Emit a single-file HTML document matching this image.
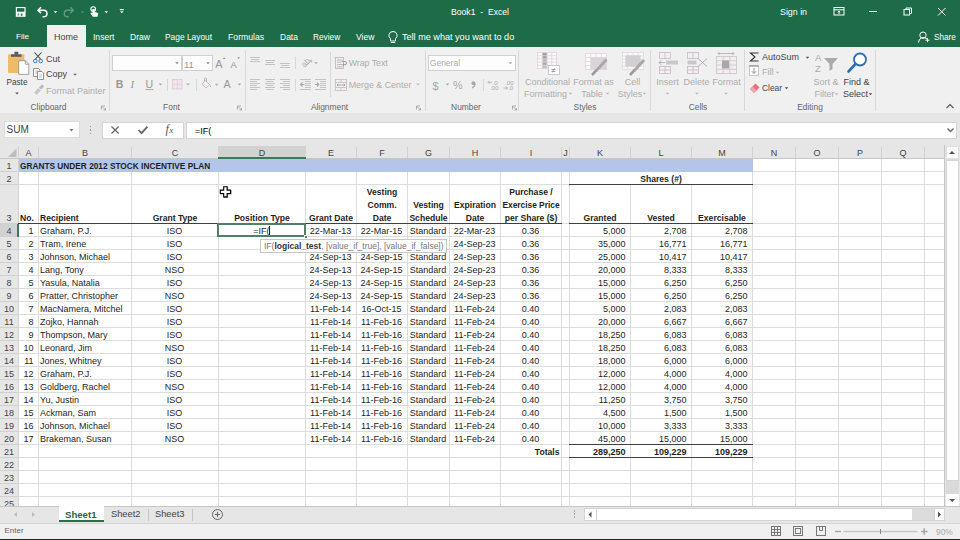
<!DOCTYPE html><html><head><meta charset="utf-8"><style>
html,body{margin:0;padding:0;}
body{width:960px;height:540px;overflow:hidden;position:relative;background:#fff;font-family:"Liberation Sans",sans-serif;}
div,svg{position:absolute;box-sizing:border-box;}
.t{white-space:nowrap;line-height:1;}
.ui{font-size:9.3px;color:#444;}
.tab{font-size:9.3px;color:#fff;}
.c{font-size:9px;color:#1e1e1e;white-space:nowrap;line-height:1;}
.c.b{font-weight:bold;font-size:8.6px;}
</style></head><body>
<div style="left:0px;top:0px;width:960px;height:47px;background:#1e6b47;"></div>
<div style="left:47px;top:25px;width:39px;height:22px;background:#f0f0f0;"></div>
<svg style="left:0;top:0" width="130" height="25" viewBox="0 0 130 25">
<rect x="15.8" y="7" width="9.8" height="9.8" fill="#fff"/>
<rect x="17" y="8.1" width="7.4" height="3.6" fill="#1e6b47"/>
<rect x="17.6" y="13.4" width="1.6" height="2.2" fill="#6a9a7e"/>
<rect x="20.8" y="13.6" width="1.6" height="2.2" fill="#1e6b47"/>
<path d="M38.5 10.2h5.2a3.3 3.3 0 0 1 0 6.6h-1.2" fill="none" stroke="#fff" stroke-width="1.5"/>
<path d="M41 7.3l-3 2.9 3 2.9" fill="none" stroke="#fff" stroke-width="1.5"/>
<path d="M53.8 11.2h3.4l-1.7 2z" fill="#fff"/>
<path d="M72.8 10.2h-5.2a3.3 3.3 0 0 0 0 6.6h1.2" fill="none" stroke="#5e9c79" stroke-width="1.5"/>
<path d="M70.3 7.3l3 2.9-3 2.9" fill="none" stroke="#5e9c79" stroke-width="1.5"/>
<path d="M81 11.4h3l-1.5 1.8z" fill="#5e9c79"/>
<circle cx="93.2" cy="9" r="2.3" fill="none" stroke="#fff" stroke-width="1.1"/>
<path d="M92.4 9v4.2l-1.2-0.8-0.8 0.8 2.4 3.5h4.8l0.6-3.6-3.5-1v-3.1z" fill="#fff"/>
<path d="M104.6 11.2h3.4l-1.7 2z" fill="#fff"/>
<path d="M119.8 9.6h4" stroke="#fff" stroke-width="1.1"/>
<path d="M120 11.3h3.6l-1.8 2z" fill="#fff"/>
</svg>
<div class="t" style="left:451px;top:8px;font-size:8.65px;color:#fff;">Book1&nbsp; -&nbsp; Excel</div>
<div class="t" style="left:780px;top:8px;font-size:8.85px;color:#fff;">Sign in</div>
<svg style="left:820px;top:0" width="140" height="25" viewBox="820 0 140 25">
<g fill="none" stroke="#fff" stroke-width="1">
<rect x="834" y="7.5" width="10" height="7.5"/>
<path d="M834 9.8h10"/>
<path d="M839 14v-3 M837.8 12.2l1.2-1.2 1.2 1.2"/>
<path d="M869 11.5h8"/>
<rect x="904" y="9.5" width="5.5" height="5.5"/>
<path d="M906 9.5v-1.5h5.5v5.5h-2"/>
<path d="M938 8l7.5 7.5 M945.5 8l-7.5 7.5"/>
</g></svg>
<div class="t tab" style="left:16px;top:32.5px;font-size:8.1px;">File</div>
<div class="t tab" style="left:93px;top:32.5px;font-size:8.55px;">Insert</div>
<div class="t tab" style="left:130px;top:32.5px;font-size:8.6px;">Draw</div>
<div class="t tab" style="left:165px;top:32.5px;font-size:8.4px;">Page Layout</div>
<div class="t tab" style="left:228px;top:32.5px;font-size:8.7px;">Formulas</div>
<div class="t tab" style="left:280px;top:32.5px;font-size:8.5px;">Data</div>
<div class="t tab" style="left:313px;top:32.5px;font-size:8.3px;">Review</div>
<div class="t tab" style="left:356px;top:32.5px;font-size:8.5px;">View</div>
<div class="t tab" style="left:54px;top:32.5px;color:#444;font-size:9px;">Home</div>
<svg style="left:385px;top:28px" width="16" height="18" viewBox="0 0 16 18">
<path d="M8 3.5a4 4 0 0 0-2.5 7.2v2.3h5v-2.3A4 4 0 0 0 8 3.5z M5.8 14.5h4.4" fill="none" stroke="#fff" stroke-width="1"/></svg>
<div class="t tab" style="left:402px;top:32.5px;font-size:9.1px;">Tell me what you want to do</div>
<svg style="left:915px;top:28px" width="16" height="18" viewBox="0 0 16 18">
<circle cx="8" cy="7.2" r="3.2" fill="none" stroke="#fff" stroke-width="1"/>
<path d="M3.5 14.5a5 5 0 0 1 8.5 -3.6" fill="none" stroke="#fff" stroke-width="1"/>
<path d="M10.5 12.2h4 M12.5 10.2v4" stroke="#fff" stroke-width="1"/></svg>
<div class="t tab" style="left:934px;top:33.5px;font-size:8.2px;">Share</div>
<div style="left:0px;top:47px;width:960px;height:67px;background:#f0f0f0;border-bottom:1px solid #dadada;"></div>
<svg style="left:0;top:0" width="960" height="113" viewBox="0 0 960 113"><path d="M109.5 50V111" stroke="#d8d8d8" stroke-width="1"/><path d="M245.5 50V111" stroke="#d8d8d8" stroke-width="1"/><path d="M425.5 50V111" stroke="#d8d8d8" stroke-width="1"/><path d="M518.5 50V111" stroke="#d8d8d8" stroke-width="1"/><path d="M650.5 50V111" stroke="#d8d8d8" stroke-width="1"/><path d="M744.5 50V111" stroke="#d8d8d8" stroke-width="1"/><path d="M875.5 50V111" stroke="#d8d8d8" stroke-width="1"/><rect x="8" y="54.3" width="16.4" height="18.6" rx="1" fill="#eebb66"/><rect x="11" y="54.3" width="10.5" height="2.5" fill="#5a5a5a"/><rect x="14.4" y="51.8" width="3.9" height="3" rx="0.8" fill="#5a5a5a"/><path d="M18.7 60.7h6.6l3.5 3.5v10.2h-10.1z" fill="#fff" stroke="#8a8a8a" stroke-width="0.8"/><path d="M25.3 60.7v3.5h3.5" fill="none" stroke="#8a8a8a" stroke-width="0.8"/><path d="M15.2 92.5h3.6l-1.8 2z" fill="#555"/><path d="M34.5 52.5L41 59.5M41.5 52.5L35 59.5" stroke="#444" stroke-width="1.1" fill="none"/><circle cx="35.3" cy="61" r="1.8" fill="none" stroke="#3d7cc9" stroke-width="1"/><circle cx="40.7" cy="61" r="1.8" fill="none" stroke="#3d7cc9" stroke-width="1"/><path d="M33.5 68.5h5l1.5 1.5v6.5h-6.5z" fill="#fff" stroke="#777" stroke-width="0.8"/><path d="M37.5 71.5h4.5l1.5 1.5v6.5h-6z" fill="#fff" stroke="#777" stroke-width="0.8"/><path d="M35 71h3M35 73h2M39 75h3M39 77h3" stroke="#999" stroke-width="0.6"/><path d="M73.2 73.7h3.6l-1.8 2z" fill="#666"/><path d="M34 92.5l4.5-4.5 2.5 2.5-4.5 4.5z" fill="#c8c8c8"/><path d="M39 87.5l3-3 2 2-3 3z" fill="#b8b8b8"/><path d="M101.5 109.5V106.0H105" stroke="#999" stroke-width="0.8" fill="none"/><path d="M102.5 107.0l3 3M105.5 108.0v2h-2" stroke="#999" stroke-width="0.8" fill="none"/><rect x="112.5" y="55.5" width="69" height="15" fill="#fdfdfd" stroke="#d0d0d0" stroke-width="1"/><rect x="182.5" y="55.5" width="30" height="15" fill="#fdfdfd" stroke="#d0d0d0" stroke-width="1"/><path d="M175.2 62.2h3.6l-1.8 2z" fill="#888"/><path d="M206.2 62.2h3.6l-1.8 2z" fill="#888"/><text x="215.3" y="68" font-family="Liberation Sans" font-size="11" fill="#999">A</text><path d="M222.6 59h3l-1.5-1.8z" fill="#999"/><text x="230.6" y="68" font-family="Liberation Sans" font-size="9.3" fill="#999">A</text><path d="M237.2 57.3h3l-1.5 1.8z" fill="#999"/><text x="115.8" y="87.7" font-family="Liberation Sans" font-weight="bold" font-size="10.5" fill="#999">B</text><text x="130.5" y="87.7" font-family="Liberation Serif" font-style="italic" font-size="11" fill="#999">I</text><text x="145.5" y="87.7" font-family="Liberation Sans" font-size="10.5" fill="#999">U</text><path d="M145.5 89.5h8" stroke="#999" stroke-width="0.8"/><path d="M158.7 83.5h3.6l-1.8 2z" fill="#aaa"/><path d="M167.5 79V91" stroke="#d8d8d8" stroke-width="1"/><g fill="#f3e3ee"><rect x="172.5" y="79.5" width="4" height="4"/><rect x="178" y="79.5" width="4" height="4"/><rect x="172.5" y="85" width="4" height="4"/><rect x="178" y="85" width="4" height="4"/></g><g stroke="#dcc4d4" stroke-width="0.7" fill="none"><rect x="172.5" y="79.5" width="9.5" height="9.5"/><path d="M177.2 79.5v9.5M172.5 84.2h9.5"/></g><path d="M186.2 83.5h3.6l-1.8 2z" fill="#aaa"/><path d="M196.5 79V91" stroke="#d8d8d8" stroke-width="1"/><path d="M205.5 80.5l4 4-3.5 3.5-4-4z" fill="none" stroke="#d0b4c6" stroke-width="0.9"/><path d="M204.5 81.5v-2.5a1 1 0 0 1 2 0v3" stroke="#aaa" stroke-width="0.8" fill="none"/><path d="M209.5 84.5q1 1 1 2.5" stroke="#aaa" stroke-width="0.8" fill="none"/><path d="M214.89999999999998 83.7h3.6l-1.8 2z" fill="#aaa"/><text x="223.6" y="87.6" font-family="Liberation Sans" font-size="10.8" fill="#999">A</text><path d="M237.7 83.5h3.6l-1.8 2z" fill="#aaa"/><path d="M237.5 109.5V106.0H241" stroke="#999" stroke-width="0.8" fill="none"/><path d="M238.5 107.0l3 3M241.5 108.0v2h-2" stroke="#999" stroke-width="0.8" fill="none"/><path d="M250 57.5h10" stroke="#bdbdbd" stroke-width="0.9"/><path d="M251 59.5h8" stroke="#bdbdbd" stroke-width="0.9"/><path d="M250 61.5h10" stroke="#bdbdbd" stroke-width="0.9"/><path d="M265 60.5h10" stroke="#bdbdbd" stroke-width="0.9"/><path d="M266 62.5h8" stroke="#bdbdbd" stroke-width="0.9"/><path d="M265 64.5h10" stroke="#bdbdbd" stroke-width="0.9"/><path d="M280 63.5h10" stroke="#bdbdbd" stroke-width="0.9"/><path d="M281 65.5h8" stroke="#bdbdbd" stroke-width="0.9"/><path d="M280 67.5h10" stroke="#bdbdbd" stroke-width="0.9"/><path d="M295.5 57V69" stroke="#d8d8d8" stroke-width="1"/><text x="300.5" y="65.5" font-family="Liberation Sans" font-size="8.2" fill="#b0b0b0" transform="rotate(-45 305 62)">ab</text><path d="M305.5 66.5l6-6M309.5 60.3h2.2v2.2" stroke="#b0b0b0" stroke-width="0.9" fill="none"/><path d="M314.2 62.2h3.6l-1.8 2z" fill="#aaa"/><path d="M250 79.5h10" stroke="#bdbdbd" stroke-width="0.9"/><path d="M250 81.5h7" stroke="#bdbdbd" stroke-width="0.9"/><path d="M250 83.5h10" stroke="#bdbdbd" stroke-width="0.9"/><path d="M250 85.5h7" stroke="#bdbdbd" stroke-width="0.9"/><path d="M250 87.5h10" stroke="#bdbdbd" stroke-width="0.9"/><path d="M250 89.5h7" stroke="#bdbdbd" stroke-width="0.9"/><path d="M265 79.5h10" stroke="#bdbdbd" stroke-width="0.9"/><path d="M266.5 81.5h7" stroke="#bdbdbd" stroke-width="0.9"/><path d="M265 83.5h10" stroke="#bdbdbd" stroke-width="0.9"/><path d="M266.5 85.5h7" stroke="#bdbdbd" stroke-width="0.9"/><path d="M265 87.5h10" stroke="#bdbdbd" stroke-width="0.9"/><path d="M266.5 89.5h7" stroke="#bdbdbd" stroke-width="0.9"/><path d="M280 79.5h10" stroke="#bdbdbd" stroke-width="0.9"/><path d="M283 81.5h7" stroke="#bdbdbd" stroke-width="0.9"/><path d="M280 83.5h10" stroke="#bdbdbd" stroke-width="0.9"/><path d="M283 85.5h7" stroke="#bdbdbd" stroke-width="0.9"/><path d="M280 87.5h10" stroke="#bdbdbd" stroke-width="0.9"/><path d="M283 89.5h7" stroke="#bdbdbd" stroke-width="0.9"/><path d="M295.5 79V91" stroke="#d8d8d8" stroke-width="1"/><path d="M300 79.5h11" stroke="#bdbdbd" stroke-width="0.9"/><path d="M305 81.5h6" stroke="#bdbdbd" stroke-width="0.9"/><path d="M305 83.5h6" stroke="#bdbdbd" stroke-width="0.9"/><path d="M305 85.5h6" stroke="#bdbdbd" stroke-width="0.9"/><path d="M305 87.5h6" stroke="#bdbdbd" stroke-width="0.9"/><path d="M300 89.5h11" stroke="#bdbdbd" stroke-width="0.9"/><path d="M304.5 84.5h-4M302.5 82.5l-2 2 2 2" stroke="#aaa" stroke-width="1.1" fill="none"/><path d="M315 79.5h11" stroke="#bdbdbd" stroke-width="0.9"/><path d="M320 81.5h6" stroke="#bdbdbd" stroke-width="0.9"/><path d="M320 83.5h6" stroke="#bdbdbd" stroke-width="0.9"/><path d="M320 85.5h6" stroke="#bdbdbd" stroke-width="0.9"/><path d="M320 87.5h6" stroke="#bdbdbd" stroke-width="0.9"/><path d="M315 89.5h11" stroke="#bdbdbd" stroke-width="0.9"/><path d="M314.8 84.5h4M316.8 82.5l2 2-2 2" stroke="#aaa" stroke-width="1.1" fill="none"/><path d="M330.5 52V97" stroke="#d8d8d8" stroke-width="1"/><g stroke="#c0b0bc" stroke-width="0.8" fill="none"><rect x="335.5" y="57.5" width="8" height="11"/></g><path d="M337 60h5.5M337 62.3h4M337 64.6h5.5M337 66.9h5.5" stroke="#aaa" stroke-width="0.8"/><path d="M341.5 61.5h3.5a1.6 1.6 0 0 1 0 3.2h-2M344 63.5l-1.3 1.2 1.3 1.2" stroke="#999" stroke-width="0.9" fill="none"/><g stroke="#c8b8c4" stroke-width="0.8" fill="none"><rect x="335.5" y="79.5" width="11" height="11"/><path d="M335.5 82.5h11M335.5 87.5h11M341 79.5v3M341 87.5v3"/></g><path d="M337 85h8M338.3 83.8l-1.3 1.2 1.3 1.2M343.7 83.8l1.3 1.2-1.3 1.2" stroke="#999" stroke-width="0.8" fill="none"/><path d="M416.2 83.5h3.6l-1.8 2z" fill="#bbb"/><path d="M416.5 109.5V106.0H420" stroke="#999" stroke-width="0.8" fill="none"/><path d="M417.5 107.0l3 3M420.5 108.0v2h-2" stroke="#999" stroke-width="0.8" fill="none"/><rect x="428.5" y="55.5" width="87" height="15" fill="#fdfdfd" stroke="#d0d0d0" stroke-width="1"/><path d="M508.7 62.2h3.6l-1.8 2z" fill="#aaa"/><text x="432.5" y="89.5" font-family="Liberation Sans" font-size="11" fill="#a8a8a8">$</text><path d="M445.7 83.5h3.6l-1.8 2z" fill="#aaa"/><text x="453" y="89.3" font-family="Liberation Sans" font-size="10.8" fill="#a8a8a8">%</text><circle cx="473.4" cy="83.2" r="1.9" fill="#a8a8a8"/><path d="M475.1 83.6q0 2.8-3 4.2" fill="none" stroke="#a8a8a8" stroke-width="1.3"/><path d="M483.5 79V91" stroke="#d8d8d8" stroke-width="1"/><path d="M492 82.3h-4M489.5 80.8l-1.5 1.5 1.5 1.5" stroke="#aaa" stroke-width="0.8" fill="none"/><text x="492.5" y="84.5" font-family="Liberation Sans" font-size="6.2" fill="#aaa">.0</text><text x="489.8" y="90.3" font-family="Liberation Sans" font-size="6.2" fill="#aaa">.00</text><text x="505" y="84.5" font-family="Liberation Sans" font-size="6.2" fill="#aaa">.00</text><path d="M503.5 88h4M506 86.5l1.5 1.5-1.5 1.5" stroke="#aaa" stroke-width="0.8" fill="none"/><text x="508" y="90.3" font-family="Liberation Sans" font-size="6.2" fill="#aaa">.0</text><path d="M512.5 109.5V106.0H516" stroke="#999" stroke-width="0.8" fill="none"/><path d="M513.5 107.0l3 3M516.5 108.0v2h-2" stroke="#999" stroke-width="0.8" fill="none"/><rect x="537.5" y="52.5" width="19" height="16" fill="#fafafa"/><rect x="542.3" y="52.5" width="4.8" height="6.4" fill="#a0a0a0"/><rect x="542.3" y="58.9" width="4.8" height="3.2" fill="#b8b8b8"/><rect x="542.3" y="62.1" width="4.8" height="3.2" fill="#a8a8a8"/><rect x="542.3" y="65.3" width="4.8" height="3.2" fill="#c0c0c0"/><g stroke="#e2d2de" stroke-width="0.8" fill="none"><rect x="537.5" y="52.5" width="19" height="16"/><path d="M542.25 52.5v16"/><path d="M547.00 52.5v16"/><path d="M551.75 52.5v16"/><path d="M537.5 55.70h19"/><path d="M537.5 58.90h19"/><path d="M537.5 62.10h19"/><path d="M537.5 65.30h19"/></g><rect x="548.5" y="65.5" width="11" height="9" fill="#fff" stroke="#c8b8c4" stroke-width="0.8"/><text x="551.3" y="72.6" font-family="Liberation Sans" font-size="8" fill="#888">&#8800;</text><path d="M568.7 92.7h3.6l-1.8 2z" fill="#bbb"/><rect x="585.5" y="53.5" width="21" height="16" fill="#fafafa"/><rect x="590.8" y="57.5" width="15.7" height="12" fill="#d6d6d6"/><g stroke="#e2d2de" stroke-width="0.8" fill="none"><rect x="585.5" y="53.5" width="21" height="16"/><path d="M590.75 53.5v16"/><path d="M596.00 53.5v16"/><path d="M601.25 53.5v16"/><path d="M585.5 57.50h21"/><path d="M585.5 61.50h21"/><path d="M585.5 65.50h21"/></g><path d="M596 71l10.5-11.5" stroke="#a8a8a8" stroke-width="3"/><path d="M592 75l4.2-4.6" stroke="#9a9a9a" stroke-width="2.6"/><path d="M605.7 92.7h3.6l-1.8 2z" fill="#bbb"/><rect x="622.5" y="52.5" width="21" height="17" fill="#fafafa"/><rect x="625.5" y="55.5" width="15" height="11" fill="#d0d0d0"/><g stroke="#e6d8e2" stroke-width="0.8" fill="none"><rect x="622.5" y="52.5" width="21" height="17"/><path d="M627.75 52.5v17"/><path d="M633.00 52.5v17"/><path d="M638.25 52.5v17"/><path d="M622.5 55.90h21"/><path d="M622.5 59.30h21"/><path d="M622.5 62.70h21"/><path d="M622.5 66.10h21"/></g><rect x="625.5" y="55.5" width="15" height="11" fill="#d0d0d0"/><path d="M634 71l10-11" stroke="#a8a8a8" stroke-width="3"/><path d="M630 75l4.2-4.6" stroke="#9a9a9a" stroke-width="2.6"/><path d="M642.7 92.7h3.6l-1.8 2z" fill="#bbb"/><g stroke="#c8b8c4" stroke-width="0.8" fill="none"><rect x="659.5" y="52.5" width="11" height="6"/><path d="M665 52.5v6"/><rect x="659.5" y="66.5" width="11" height="7"/><path d="M665 66.5v7M659.5 70h11"/></g><rect x="666" y="60.5" width="12" height="4" fill="#c8c8c8"/><path d="M665 62.5h-6M661.5 60l-2.5 2.5 2.5 2.5" stroke="#aaa" stroke-width="0.9" fill="none"/><path d="M665.7 92.7h3.6l-1.8 2z" fill="#bbb"/><g stroke="#c8b8c4" stroke-width="0.8" fill="none"><rect x="687.5" y="52.5" width="11" height="6"/><path d="M693 52.5v6"/><rect x="687.5" y="66.5" width="11" height="7"/><path d="M693 66.5v7M687.5 70h11"/></g><rect x="687.5" y="60.5" width="9" height="4" fill="#c8c8c8"/><path d="M698 58.5l9 8M707 58.5l-9 8" stroke="#aaa" stroke-width="0.9"/><path d="M695.2 92.7h3.6l-1.8 2z" fill="#bbb"/><g stroke="#d0c0cc" stroke-width="0.8" fill="none"><rect x="716.5" y="56.5" width="20" height="17"/><path d="M716.5 60.75h20"/><path d="M716.5 65.0h20"/><path d="M716.5 69.25h20"/><path d="M723.1666666666666 56.5v17M729.8333333333334 56.5v17"/></g><rect x="722" y="60.5" width="7" height="8" fill="#a8a8a8"/><path d="M718 53.5h16M719.5 52l-1.5 1.5 1.5 1.5M732.5 52l1.5 1.5-1.5 1.5" stroke="#aaa" stroke-width="0.8" fill="none"/><path d="M724.2 92.7h3.6l-1.8 2z" fill="#bbb"/><path d="M758.5 53h-8l4.5 4-4.5 4h8" stroke="#333" stroke-width="1.1" fill="none"/><path d="M805.7 56.7h3.6l-1.8 2z" fill="#555"/><rect x="749.5" y="65.5" width="9" height="10" fill="#fff" stroke="#bbb" stroke-width="0.8"/><path d="M749.5 66h9" stroke="#999" stroke-width="1.3"/><path d="M754 68v5.5M751.8 71.2l2.2 2.2 2.2-2.2" stroke="#888" stroke-width="0.9" fill="none"/><path d="M775.7 71.7h3.6l-1.8 2z" fill="#bbb"/><path d="M750 89l5.5-5.5 4 4-5.5 5.5z" fill="#ee6f7c"/><path d="M750 89l2.5-2.5 4 4-2.5 2.5z" fill="#f3a5ad"/><path d="M784.7 87.2h3.6l-1.8 2z" fill="#555"/><text x="815" y="61" font-family="Liberation Sans" font-size="9.5" fill="#aaa">A</text><text x="815" y="72" font-family="Liberation Sans" font-size="9.5" fill="#aaa">Z</text><path d="M824 58h14l-5.5 6v5l-3 2v-7z" fill="#aaa"/><path d="M834.7 93.2h3.6l-1.8 2z" fill="#bbb"/><circle cx="860" cy="59.5" r="6" fill="#fff" stroke="#2e6db4" stroke-width="1.8"/><path d="M855.5 64l-7 7.5" stroke="#2e6db4" stroke-width="2.6" stroke-linecap="round"/><path d="M868.7 93.2h3.6l-1.8 2z" fill="#555"/><path d="M946.5 108l3.5-3.5 3.5 3.5" stroke="#555" stroke-width="1.1" fill="none"/></svg>
<div class="t" style="left:46px;top:54.5px;font-size:9px;color:#444;">Cut</div>
<div class="t" style="left:46px;top:70.3px;font-size:9px;color:#444;">Copy</div>
<div class="t" style="left:46px;top:87px;font-size:9px;color:#adadad;">Format Painter</div>
<div class="t" style="left:6.5px;top:78.7px;font-size:8.2px;color:#444;">Paste</div>
<div class="t" style="left:-11.5px;width:120px;text-align:center;top:102.6px;font-size:8.4px;color:#666;">Clipboard</div>
<div class="t" style="left:184px;top:59.8px;font-size:9.6px;color:#999;">11</div>
<div class="t" style="left:111.5px;width:120px;text-align:center;top:102.6px;font-size:8.4px;color:#666;">Font</div>
<div class="t" style="left:348.7px;top:58.9px;font-size:8.75px;color:#adadad;">Wrap Text</div>
<div class="t" style="left:348.7px;top:81.2px;font-size:8.9px;color:#adadad;">Merge &amp; Center</div>
<div class="t" style="left:269.5px;width:120px;text-align:center;top:102.6px;font-size:8.4px;color:#666;">Alignment</div>
<div class="t" style="left:429.8px;top:59.4px;font-size:8.5px;color:#aaa;">General</div>
<div class="t" style="left:406px;width:120px;text-align:center;top:102.6px;font-size:8.4px;color:#666;">Number</div>
<div class="t" style="left:487.5px;width:120px;text-align:center;top:77.8px;font-size:9px;color:#adadad;">Conditional</div>
<div class="t" style="left:485.5px;width:120px;text-align:center;top:89.8px;font-size:9px;color:#adadad;">Formatting</div>
<div class="t" style="left:533.5px;width:120px;text-align:center;top:77.8px;font-size:9px;color:#adadad;">Format as</div>
<div class="t" style="left:532px;width:120px;text-align:center;top:89.8px;font-size:9px;color:#adadad;">Table</div>
<div class="t" style="left:572.5px;width:120px;text-align:center;top:77.8px;font-size:9px;color:#adadad;">Cell</div>
<div class="t" style="left:570px;width:120px;text-align:center;top:89.8px;font-size:9px;color:#adadad;">Styles</div>
<div class="t" style="left:525px;width:120px;text-align:center;top:102.6px;font-size:8.4px;color:#666;">Styles</div>
<div class="t" style="left:607.5px;width:120px;text-align:center;top:77.8px;font-size:9px;color:#adadad;">Insert</div>
<div class="t" style="left:636.5px;width:120px;text-align:center;top:77.8px;font-size:9px;color:#adadad;">Delete</div>
<div class="t" style="left:666.5px;width:120px;text-align:center;top:77.8px;font-size:9px;color:#adadad;">Format</div>
<div class="t" style="left:638px;width:120px;text-align:center;top:102.6px;font-size:8.4px;color:#666;">Cells</div>
<div class="t" style="left:762px;top:53px;font-size:9px;color:#444;">AutoSum</div>
<div class="t" style="left:762px;top:68px;font-size:9px;color:#adadad;">Fill</div>
<div class="t" style="left:762px;top:83.5px;font-size:8.4px;color:#444;">Clear</div>
<div class="t" style="left:766px;width:120px;text-align:center;top:78px;font-size:9px;color:#adadad;">Sort &amp;</div>
<div class="t" style="left:764.5px;width:120px;text-align:center;top:90px;font-size:9px;color:#adadad;">Filter</div>
<div class="t" style="left:796.5px;width:120px;text-align:center;top:78px;font-size:9px;color:#444;">Find &amp;</div>
<div class="t" style="left:795.5px;width:120px;text-align:center;top:90px;font-size:9px;color:#444;">Select</div>
<div class="t" style="left:750px;width:120px;text-align:center;top:102.6px;font-size:8.4px;color:#666;">Editing</div>
<div style="left:0px;top:113px;width:960px;height:33px;background:#e6e6e6;"></div>
<div style="left:4px;top:121px;width:76px;height:17px;background:#fff;border:1px solid #dcdcdc;"></div>
<div class="t" style="left:6.5px;top:125px;font-size:10px;color:#444;">SUM</div>
<svg style="left:68px;top:128px" width="8" height="5"><path d="M1.5 1h4l-2 2.5z" fill="#777"/></svg>
<div style="left:90px;top:125.5px;width:1.2px;height:1.5px;background:#999;"></div>
<div style="left:90px;top:129px;width:1.2px;height:1.5px;background:#999;"></div>
<div style="left:90px;top:132.5px;width:1.2px;height:1.5px;background:#999;"></div>
<div style="left:102px;top:122px;width:82px;height:17px;background:#fff;border:1px solid #d4d4d4;"></div>
<svg style="left:102px;top:122px" width="82" height="17" viewBox="0 0 82 17">
<path d="M9.5 4.5l7.2 7 M16.7 4.5l-7.2 7" stroke="#666" stroke-width="1.2" fill="none"/>
<path d="M36.6 8l3 3.2 5.8-6.6" stroke="#666" stroke-width="1.8" fill="none"/>
</svg>
<svg style="left:160px;top:120px" width="20" height="18" viewBox="160 120 20 18"><text x="165.5" y="132.8" font-family="Liberation Serif" font-style="italic" font-size="12" fill="#555">f</text><text x="169.3" y="133" font-family="Liberation Serif" font-style="italic" font-size="9" fill="#555">x</text></svg>
<div style="left:186px;top:122px;width:771px;height:17px;background:#fff;border:1px solid #d4d4d4;"></div>
<div class="t" style="left:195px;top:127px;font-size:9px;color:#000;">=IF(</div>
<svg style="left:946px;top:127px" width="10" height="7"><path d="M1.5 1.5l3 3 3-3" stroke="#666" stroke-width="1.4" fill="none"/></svg>
<div style="left:0px;top:146px;width:945px;height:12px;background:#e6e6e6;"></div>
<div style="left:0px;top:158px;width:18px;height:348px;background:#e6e6e6;"></div>
<div style="left:18px;top:158px;width:927px;height:348px;background:#fff;"></div>
<div style="left:38px;top:158px;width:1px;height:348px;background:#dcdcdc;"></div>
<div style="left:131px;top:158px;width:1px;height:348px;background:#dcdcdc;"></div>
<div style="left:218px;top:158px;width:1px;height:348px;background:#dcdcdc;"></div>
<div style="left:305px;top:158px;width:1px;height:348px;background:#dcdcdc;"></div>
<div style="left:356px;top:158px;width:1px;height:348px;background:#dcdcdc;"></div>
<div style="left:407px;top:158px;width:1px;height:348px;background:#dcdcdc;"></div>
<div style="left:449px;top:158px;width:1px;height:348px;background:#dcdcdc;"></div>
<div style="left:500px;top:158px;width:1px;height:348px;background:#dcdcdc;"></div>
<div style="left:561px;top:158px;width:1px;height:348px;background:#dcdcdc;"></div>
<div style="left:569px;top:158px;width:1px;height:348px;background:#dcdcdc;"></div>
<div style="left:630px;top:158px;width:1px;height:348px;background:#dcdcdc;"></div>
<div style="left:691px;top:158px;width:1px;height:348px;background:#dcdcdc;"></div>
<div style="left:752px;top:158px;width:1px;height:348px;background:#dcdcdc;"></div>
<div style="left:795px;top:158px;width:1px;height:348px;background:#dcdcdc;"></div>
<div style="left:838px;top:158px;width:1px;height:348px;background:#dcdcdc;"></div>
<div style="left:881px;top:158px;width:1px;height:348px;background:#dcdcdc;"></div>
<div style="left:924px;top:158px;width:1px;height:348px;background:#dcdcdc;"></div>
<div style="left:944px;top:158px;width:1px;height:348px;background:#dcdcdc;"></div>
<div style="left:18px;top:171px;width:927px;height:1px;background:#dcdcdc;"></div>
<div style="left:18px;top:184px;width:927px;height:1px;background:#dcdcdc;"></div>
<div style="left:18px;top:223px;width:927px;height:1px;background:#dcdcdc;"></div>
<div style="left:18px;top:236px;width:927px;height:1px;background:#dcdcdc;"></div>
<div style="left:18px;top:249px;width:927px;height:1px;background:#dcdcdc;"></div>
<div style="left:18px;top:262px;width:927px;height:1px;background:#dcdcdc;"></div>
<div style="left:18px;top:275px;width:927px;height:1px;background:#dcdcdc;"></div>
<div style="left:18px;top:288px;width:927px;height:1px;background:#dcdcdc;"></div>
<div style="left:18px;top:301px;width:927px;height:1px;background:#dcdcdc;"></div>
<div style="left:18px;top:314px;width:927px;height:1px;background:#dcdcdc;"></div>
<div style="left:18px;top:327px;width:927px;height:1px;background:#dcdcdc;"></div>
<div style="left:18px;top:340px;width:927px;height:1px;background:#dcdcdc;"></div>
<div style="left:18px;top:353px;width:927px;height:1px;background:#dcdcdc;"></div>
<div style="left:18px;top:366px;width:927px;height:1px;background:#dcdcdc;"></div>
<div style="left:18px;top:379px;width:927px;height:1px;background:#dcdcdc;"></div>
<div style="left:18px;top:392px;width:927px;height:1px;background:#dcdcdc;"></div>
<div style="left:18px;top:405px;width:927px;height:1px;background:#dcdcdc;"></div>
<div style="left:18px;top:418px;width:927px;height:1px;background:#dcdcdc;"></div>
<div style="left:18px;top:431px;width:927px;height:1px;background:#dcdcdc;"></div>
<div style="left:18px;top:444px;width:927px;height:1px;background:#dcdcdc;"></div>
<div style="left:18px;top:457px;width:927px;height:1px;background:#dcdcdc;"></div>
<div style="left:18px;top:470px;width:927px;height:1px;background:#dcdcdc;"></div>
<div style="left:18px;top:483px;width:927px;height:1px;background:#dcdcdc;"></div>
<div style="left:18px;top:496px;width:927px;height:1px;background:#dcdcdc;"></div>
<div style="left:18px;top:509px;width:927px;height:1px;background:#dcdcdc;"></div>
<div style="left:19px;top:159px;width:734px;height:13px;background:#b4c6e7;"></div>
<div style="left:38px;top:147px;width:1px;height:11px;background:#d0d0d0;"></div>
<div style="left:131px;top:147px;width:1px;height:11px;background:#d0d0d0;"></div>
<div style="left:218px;top:147px;width:1px;height:11px;background:#d0d0d0;"></div>
<div style="left:305px;top:147px;width:1px;height:11px;background:#d0d0d0;"></div>
<div style="left:356px;top:147px;width:1px;height:11px;background:#d0d0d0;"></div>
<div style="left:407px;top:147px;width:1px;height:11px;background:#d0d0d0;"></div>
<div style="left:449px;top:147px;width:1px;height:11px;background:#d0d0d0;"></div>
<div style="left:500px;top:147px;width:1px;height:11px;background:#d0d0d0;"></div>
<div style="left:561px;top:147px;width:1px;height:11px;background:#d0d0d0;"></div>
<div style="left:569px;top:147px;width:1px;height:11px;background:#d0d0d0;"></div>
<div style="left:630px;top:147px;width:1px;height:11px;background:#d0d0d0;"></div>
<div style="left:691px;top:147px;width:1px;height:11px;background:#d0d0d0;"></div>
<div style="left:752px;top:147px;width:1px;height:11px;background:#d0d0d0;"></div>
<div style="left:795px;top:147px;width:1px;height:11px;background:#d0d0d0;"></div>
<div style="left:838px;top:147px;width:1px;height:11px;background:#d0d0d0;"></div>
<div style="left:881px;top:147px;width:1px;height:11px;background:#d0d0d0;"></div>
<div style="left:924px;top:147px;width:1px;height:11px;background:#d0d0d0;"></div>
<div style="left:0px;top:158px;width:945px;height:1px;background:#c6c6c6;"></div>
<div style="left:0px;top:171px;width:18px;height:1px;background:#d0d0d0;"></div>
<div style="left:0px;top:184px;width:18px;height:1px;background:#d0d0d0;"></div>
<div style="left:0px;top:223px;width:18px;height:1px;background:#d0d0d0;"></div>
<div style="left:0px;top:236px;width:18px;height:1px;background:#d0d0d0;"></div>
<div style="left:0px;top:249px;width:18px;height:1px;background:#d0d0d0;"></div>
<div style="left:0px;top:262px;width:18px;height:1px;background:#d0d0d0;"></div>
<div style="left:0px;top:275px;width:18px;height:1px;background:#d0d0d0;"></div>
<div style="left:0px;top:288px;width:18px;height:1px;background:#d0d0d0;"></div>
<div style="left:0px;top:301px;width:18px;height:1px;background:#d0d0d0;"></div>
<div style="left:0px;top:314px;width:18px;height:1px;background:#d0d0d0;"></div>
<div style="left:0px;top:327px;width:18px;height:1px;background:#d0d0d0;"></div>
<div style="left:0px;top:340px;width:18px;height:1px;background:#d0d0d0;"></div>
<div style="left:0px;top:353px;width:18px;height:1px;background:#d0d0d0;"></div>
<div style="left:0px;top:366px;width:18px;height:1px;background:#d0d0d0;"></div>
<div style="left:0px;top:379px;width:18px;height:1px;background:#d0d0d0;"></div>
<div style="left:0px;top:392px;width:18px;height:1px;background:#d0d0d0;"></div>
<div style="left:0px;top:405px;width:18px;height:1px;background:#d0d0d0;"></div>
<div style="left:0px;top:418px;width:18px;height:1px;background:#d0d0d0;"></div>
<div style="left:0px;top:431px;width:18px;height:1px;background:#d0d0d0;"></div>
<div style="left:0px;top:444px;width:18px;height:1px;background:#d0d0d0;"></div>
<div style="left:0px;top:457px;width:18px;height:1px;background:#d0d0d0;"></div>
<div style="left:0px;top:470px;width:18px;height:1px;background:#d0d0d0;"></div>
<div style="left:0px;top:483px;width:18px;height:1px;background:#d0d0d0;"></div>
<div style="left:0px;top:496px;width:18px;height:1px;background:#d0d0d0;"></div>
<div style="left:0px;top:509px;width:18px;height:1px;background:#d0d0d0;"></div>
<div style="left:18px;top:146px;width:1px;height:360px;background:#d2d2d2;"></div>
<svg style="left:0;top:146px" width="18" height="12"><path d="M8 11 L16.5 11 L16.5 2.5 Z" fill="#bdbdbd"/></svg>
<div style="left:218px;top:146px;width:88px;height:12px;background:#d2d2d2;"></div>
<div style="left:218px;top:157px;width:88px;height:2px;background:#3b7a55;"></div>
<div style="left:0px;top:224px;width:18px;height:12px;background:#d2d2d2;"></div>
<div style="left:17px;top:224px;width:1.5px;height:13px;background:#3b7a55;"></div>
<div class="t" style="left:18px;top:148.5px;width:21px;text-align:center;font-size:9px;color:#444;">A</div>
<div class="t" style="left:38px;top:148.5px;width:94px;text-align:center;font-size:9px;color:#444;">B</div>
<div class="t" style="left:131px;top:148.5px;width:88px;text-align:center;font-size:9px;color:#444;">C</div>
<div class="t" style="left:218px;top:148.5px;width:88px;text-align:center;font-size:9px;color:#444;">D</div>
<div class="t" style="left:305px;top:148.5px;width:52px;text-align:center;font-size:9px;color:#444;">E</div>
<div class="t" style="left:356px;top:148.5px;width:52px;text-align:center;font-size:9px;color:#444;">F</div>
<div class="t" style="left:407px;top:148.5px;width:43px;text-align:center;font-size:9px;color:#444;">G</div>
<div class="t" style="left:449px;top:148.5px;width:52px;text-align:center;font-size:9px;color:#444;">H</div>
<div class="t" style="left:500px;top:148.5px;width:62px;text-align:center;font-size:9px;color:#444;">I</div>
<div class="t" style="left:561px;top:148.5px;width:9px;text-align:center;font-size:9px;color:#444;">J</div>
<div class="t" style="left:569px;top:148.5px;width:62px;text-align:center;font-size:9px;color:#444;">K</div>
<div class="t" style="left:630px;top:148.5px;width:62px;text-align:center;font-size:9px;color:#444;">L</div>
<div class="t" style="left:691px;top:148.5px;width:62px;text-align:center;font-size:9px;color:#444;">M</div>
<div class="t" style="left:752px;top:148.5px;width:44px;text-align:center;font-size:9px;color:#444;">N</div>
<div class="t" style="left:795px;top:148.5px;width:44px;text-align:center;font-size:9px;color:#444;">O</div>
<div class="t" style="left:838px;top:148.5px;width:44px;text-align:center;font-size:9px;color:#444;">P</div>
<div class="t" style="left:881px;top:148.5px;width:44px;text-align:center;font-size:9px;color:#444;">Q</div>
<div style="left:0;top:0;width:18px;height:506px;overflow:hidden;">
<div class="t" style="left:0;top:162px;width:18px;text-align:center;font-size:9px;color:#444;">1</div>
<div class="t" style="left:0;top:175px;width:18px;text-align:center;font-size:9px;color:#444;">2</div>
<div class="t" style="left:0;top:214px;width:18px;text-align:center;font-size:9px;color:#444;">3</div>
<div class="t" style="left:0;top:227px;width:18px;text-align:center;font-size:9px;color:#444;">4</div>
<div class="t" style="left:0;top:240px;width:18px;text-align:center;font-size:9px;color:#444;">5</div>
<div class="t" style="left:0;top:253px;width:18px;text-align:center;font-size:9px;color:#444;">6</div>
<div class="t" style="left:0;top:266px;width:18px;text-align:center;font-size:9px;color:#444;">7</div>
<div class="t" style="left:0;top:279px;width:18px;text-align:center;font-size:9px;color:#444;">8</div>
<div class="t" style="left:0;top:292px;width:18px;text-align:center;font-size:9px;color:#444;">9</div>
<div class="t" style="left:0;top:305px;width:18px;text-align:center;font-size:9px;color:#444;">10</div>
<div class="t" style="left:0;top:318px;width:18px;text-align:center;font-size:9px;color:#444;">11</div>
<div class="t" style="left:0;top:331px;width:18px;text-align:center;font-size:9px;color:#444;">12</div>
<div class="t" style="left:0;top:344px;width:18px;text-align:center;font-size:9px;color:#444;">13</div>
<div class="t" style="left:0;top:357px;width:18px;text-align:center;font-size:9px;color:#444;">14</div>
<div class="t" style="left:0;top:370px;width:18px;text-align:center;font-size:9px;color:#444;">15</div>
<div class="t" style="left:0;top:383px;width:18px;text-align:center;font-size:9px;color:#444;">16</div>
<div class="t" style="left:0;top:396px;width:18px;text-align:center;font-size:9px;color:#444;">17</div>
<div class="t" style="left:0;top:409px;width:18px;text-align:center;font-size:9px;color:#444;">18</div>
<div class="t" style="left:0;top:422px;width:18px;text-align:center;font-size:9px;color:#444;">19</div>
<div class="t" style="left:0;top:435px;width:18px;text-align:center;font-size:9px;color:#444;">20</div>
<div class="t" style="left:0;top:448px;width:18px;text-align:center;font-size:9px;color:#444;">21</div>
<div class="t" style="left:0;top:461px;width:18px;text-align:center;font-size:9px;color:#444;">22</div>
<div class="t" style="left:0;top:474px;width:18px;text-align:center;font-size:9px;color:#444;">23</div>
<div class="t" style="left:0;top:487px;width:18px;text-align:center;font-size:9px;color:#444;">24</div>
<div class="t" style="left:0;top:500px;width:18px;text-align:center;font-size:9px;color:#444;">25</div>
</div>
<div class="c b" style="top:162px;left:20px;font-size:8.3px;">GRANTS UNDER 2012 STOCK INCENTIVE PLAN</div>
<div style="left:570px;top:172px;width:182px;height:12px;background:#fff;"></div>
<div class="c b" style="left:569px;width:184px;top:175px;text-align:center;">Shares (#)</div>
<div style="left:569px;top:184px;width:184px;height:1px;background:#404040;"></div>
<div class="c b" style="left:20px;top:214px;">No.</div>
<div class="c b" style="left:40px;top:214px;">Recipient</div>
<div class="c b" style="left:131px;width:88px;top:214px;text-align:center;">Grant Type</div>
<div class="c b" style="left:218px;width:88px;top:214px;text-align:center;">Position Type</div>
<div class="c b" style="left:305px;width:52px;top:214px;text-align:center;">Grant Date</div>
<div class="c b" style="left:356px;width:52px;top:188px;text-align:center;">Vesting</div>
<div class="c b" style="left:356px;width:52px;top:201px;text-align:center;">Comm.</div>
<div class="c b" style="left:356px;width:52px;top:214px;text-align:center;">Date</div>
<div class="c b" style="left:407px;width:43px;top:201px;text-align:center;">Vesting</div>
<div class="c b" style="left:407px;width:43px;top:214px;text-align:center;">Schedule</div>
<div class="c b" style="left:449px;width:52px;top:201px;text-align:center;">Expiration</div>
<div class="c b" style="left:449px;width:52px;top:214px;text-align:center;">Date</div>
<div class="c b" style="left:500px;width:62px;top:188px;text-align:center;">Purchase /</div>
<div class="c b" style="left:500px;width:62px;top:201px;text-align:center;font-size:8.35px;">Exercise Price</div>
<div class="c b" style="left:500px;width:62px;top:214px;text-align:center;">per Share ($)</div>
<div class="c b" style="left:569px;width:62px;top:214px;text-align:center;">Granted</div>
<div class="c b" style="left:630px;width:62px;top:214px;text-align:center;">Vested</div>
<div class="c b" style="left:691px;width:62px;top:214px;text-align:center;">Exercisable</div>
<div style="left:18px;top:223px;width:544px;height:1px;background:#404040;"></div>
<div style="left:569px;top:223px;width:184px;height:1px;background:#404040;"></div>
<div class="c" style="top:227px;right:926.5px;text-align:right;">1</div>
<div class="c" style="top:227px;left:40px;">Graham, P.J.</div>
<div class="c" style="top:227px;left:131px;width:87px;text-align:center;">ISO</div>
<div class="c" style="top:227px;left:305px;width:51px;text-align:center;">22-Mar-13</div>
<div class="c" style="top:227px;left:356px;width:51px;text-align:center;">22-Mar-15</div>
<div class="c" style="top:227px;left:407px;width:42px;text-align:center;">Standard</div>
<div class="c" style="top:227px;left:449px;width:51px;text-align:center;">22-Mar-23</div>
<div class="c" style="top:227px;left:500px;width:61px;text-align:center;">0.36</div>
<div class="c" style="top:227px;right:334.5px;text-align:right;">5,000</div>
<div class="c" style="top:227px;right:273.5px;text-align:right;">2,708</div>
<div class="c" style="top:227px;right:212.5px;text-align:right;">2,708</div>
<div class="c" style="top:240px;right:926.5px;text-align:right;">2</div>
<div class="c" style="top:240px;left:40px;">Tram, Irene</div>
<div class="c" style="top:240px;left:131px;width:87px;text-align:center;">ISO</div>
<div class="c" style="top:240px;left:305px;width:51px;text-align:center;">24-Sep-13</div>
<div class="c" style="top:240px;left:356px;width:51px;text-align:center;">24-Sep-15</div>
<div class="c" style="top:240px;left:407px;width:42px;text-align:center;">Standard</div>
<div class="c" style="top:240px;left:449px;width:51px;text-align:center;">24-Sep-23</div>
<div class="c" style="top:240px;left:500px;width:61px;text-align:center;">0.36</div>
<div class="c" style="top:240px;right:334.5px;text-align:right;">35,000</div>
<div class="c" style="top:240px;right:273.5px;text-align:right;">16,771</div>
<div class="c" style="top:240px;right:212.5px;text-align:right;">16,771</div>
<div class="c" style="top:253px;right:926.5px;text-align:right;">3</div>
<div class="c" style="top:253px;left:40px;">Johnson, Michael</div>
<div class="c" style="top:253px;left:131px;width:87px;text-align:center;">ISO</div>
<div class="c" style="top:253px;left:305px;width:51px;text-align:center;">24-Sep-13</div>
<div class="c" style="top:253px;left:356px;width:51px;text-align:center;">24-Sep-15</div>
<div class="c" style="top:253px;left:407px;width:42px;text-align:center;">Standard</div>
<div class="c" style="top:253px;left:449px;width:51px;text-align:center;">24-Sep-23</div>
<div class="c" style="top:253px;left:500px;width:61px;text-align:center;">0.36</div>
<div class="c" style="top:253px;right:334.5px;text-align:right;">25,000</div>
<div class="c" style="top:253px;right:273.5px;text-align:right;">10,417</div>
<div class="c" style="top:253px;right:212.5px;text-align:right;">10,417</div>
<div class="c" style="top:266px;right:926.5px;text-align:right;">4</div>
<div class="c" style="top:266px;left:40px;">Lang, Tony</div>
<div class="c" style="top:266px;left:131px;width:87px;text-align:center;">NSO</div>
<div class="c" style="top:266px;left:305px;width:51px;text-align:center;">24-Sep-13</div>
<div class="c" style="top:266px;left:356px;width:51px;text-align:center;">24-Sep-15</div>
<div class="c" style="top:266px;left:407px;width:42px;text-align:center;">Standard</div>
<div class="c" style="top:266px;left:449px;width:51px;text-align:center;">24-Sep-23</div>
<div class="c" style="top:266px;left:500px;width:61px;text-align:center;">0.36</div>
<div class="c" style="top:266px;right:334.5px;text-align:right;">20,000</div>
<div class="c" style="top:266px;right:273.5px;text-align:right;">8,333</div>
<div class="c" style="top:266px;right:212.5px;text-align:right;">8,333</div>
<div class="c" style="top:279px;right:926.5px;text-align:right;">5</div>
<div class="c" style="top:279px;left:40px;">Yasula, Natalia</div>
<div class="c" style="top:279px;left:131px;width:87px;text-align:center;">ISO</div>
<div class="c" style="top:279px;left:305px;width:51px;text-align:center;">24-Sep-13</div>
<div class="c" style="top:279px;left:356px;width:51px;text-align:center;">24-Sep-15</div>
<div class="c" style="top:279px;left:407px;width:42px;text-align:center;">Standard</div>
<div class="c" style="top:279px;left:449px;width:51px;text-align:center;">24-Sep-23</div>
<div class="c" style="top:279px;left:500px;width:61px;text-align:center;">0.36</div>
<div class="c" style="top:279px;right:334.5px;text-align:right;">15,000</div>
<div class="c" style="top:279px;right:273.5px;text-align:right;">6,250</div>
<div class="c" style="top:279px;right:212.5px;text-align:right;">6,250</div>
<div class="c" style="top:292px;right:926.5px;text-align:right;">6</div>
<div class="c" style="top:292px;left:40px;">Pratter, Christopher</div>
<div class="c" style="top:292px;left:131px;width:87px;text-align:center;">NSO</div>
<div class="c" style="top:292px;left:305px;width:51px;text-align:center;">24-Sep-13</div>
<div class="c" style="top:292px;left:356px;width:51px;text-align:center;">24-Sep-15</div>
<div class="c" style="top:292px;left:407px;width:42px;text-align:center;">Standard</div>
<div class="c" style="top:292px;left:449px;width:51px;text-align:center;">24-Sep-23</div>
<div class="c" style="top:292px;left:500px;width:61px;text-align:center;">0.36</div>
<div class="c" style="top:292px;right:334.5px;text-align:right;">15,000</div>
<div class="c" style="top:292px;right:273.5px;text-align:right;">6,250</div>
<div class="c" style="top:292px;right:212.5px;text-align:right;">6,250</div>
<div class="c" style="top:305px;right:926.5px;text-align:right;">7</div>
<div class="c" style="top:305px;left:40px;">MacNamera, Mitchel</div>
<div class="c" style="top:305px;left:131px;width:87px;text-align:center;">ISO</div>
<div class="c" style="top:305px;left:305px;width:51px;text-align:center;">11-Feb-14</div>
<div class="c" style="top:305px;left:356px;width:51px;text-align:center;">16-Oct-15</div>
<div class="c" style="top:305px;left:407px;width:42px;text-align:center;">Standard</div>
<div class="c" style="top:305px;left:449px;width:51px;text-align:center;">11-Feb-24</div>
<div class="c" style="top:305px;left:500px;width:61px;text-align:center;">0.40</div>
<div class="c" style="top:305px;right:334.5px;text-align:right;">5,000</div>
<div class="c" style="top:305px;right:273.5px;text-align:right;">2,083</div>
<div class="c" style="top:305px;right:212.5px;text-align:right;">2,083</div>
<div class="c" style="top:318px;right:926.5px;text-align:right;">8</div>
<div class="c" style="top:318px;left:40px;">Zojko, Hannah</div>
<div class="c" style="top:318px;left:131px;width:87px;text-align:center;">ISO</div>
<div class="c" style="top:318px;left:305px;width:51px;text-align:center;">11-Feb-14</div>
<div class="c" style="top:318px;left:356px;width:51px;text-align:center;">11-Feb-16</div>
<div class="c" style="top:318px;left:407px;width:42px;text-align:center;">Standard</div>
<div class="c" style="top:318px;left:449px;width:51px;text-align:center;">11-Feb-24</div>
<div class="c" style="top:318px;left:500px;width:61px;text-align:center;">0.40</div>
<div class="c" style="top:318px;right:334.5px;text-align:right;">20,000</div>
<div class="c" style="top:318px;right:273.5px;text-align:right;">6,667</div>
<div class="c" style="top:318px;right:212.5px;text-align:right;">6,667</div>
<div class="c" style="top:331px;right:926.5px;text-align:right;">9</div>
<div class="c" style="top:331px;left:40px;">Thompson, Mary</div>
<div class="c" style="top:331px;left:131px;width:87px;text-align:center;">ISO</div>
<div class="c" style="top:331px;left:305px;width:51px;text-align:center;">11-Feb-14</div>
<div class="c" style="top:331px;left:356px;width:51px;text-align:center;">11-Feb-16</div>
<div class="c" style="top:331px;left:407px;width:42px;text-align:center;">Standard</div>
<div class="c" style="top:331px;left:449px;width:51px;text-align:center;">11-Feb-24</div>
<div class="c" style="top:331px;left:500px;width:61px;text-align:center;">0.40</div>
<div class="c" style="top:331px;right:334.5px;text-align:right;">18,250</div>
<div class="c" style="top:331px;right:273.5px;text-align:right;">6,083</div>
<div class="c" style="top:331px;right:212.5px;text-align:right;">6,083</div>
<div class="c" style="top:344px;right:926.5px;text-align:right;">10</div>
<div class="c" style="top:344px;left:40px;">Leonard, Jim</div>
<div class="c" style="top:344px;left:131px;width:87px;text-align:center;">NSO</div>
<div class="c" style="top:344px;left:305px;width:51px;text-align:center;">11-Feb-14</div>
<div class="c" style="top:344px;left:356px;width:51px;text-align:center;">11-Feb-16</div>
<div class="c" style="top:344px;left:407px;width:42px;text-align:center;">Standard</div>
<div class="c" style="top:344px;left:449px;width:51px;text-align:center;">11-Feb-24</div>
<div class="c" style="top:344px;left:500px;width:61px;text-align:center;">0.40</div>
<div class="c" style="top:344px;right:334.5px;text-align:right;">18,250</div>
<div class="c" style="top:344px;right:273.5px;text-align:right;">6,083</div>
<div class="c" style="top:344px;right:212.5px;text-align:right;">6,083</div>
<div class="c" style="top:357px;right:926.5px;text-align:right;">11</div>
<div class="c" style="top:357px;left:40px;">Jones, Whitney</div>
<div class="c" style="top:357px;left:131px;width:87px;text-align:center;">ISO</div>
<div class="c" style="top:357px;left:305px;width:51px;text-align:center;">11-Feb-14</div>
<div class="c" style="top:357px;left:356px;width:51px;text-align:center;">11-Feb-16</div>
<div class="c" style="top:357px;left:407px;width:42px;text-align:center;">Standard</div>
<div class="c" style="top:357px;left:449px;width:51px;text-align:center;">11-Feb-24</div>
<div class="c" style="top:357px;left:500px;width:61px;text-align:center;">0.40</div>
<div class="c" style="top:357px;right:334.5px;text-align:right;">18,000</div>
<div class="c" style="top:357px;right:273.5px;text-align:right;">6,000</div>
<div class="c" style="top:357px;right:212.5px;text-align:right;">6,000</div>
<div class="c" style="top:370px;right:926.5px;text-align:right;">12</div>
<div class="c" style="top:370px;left:40px;">Graham, P.J.</div>
<div class="c" style="top:370px;left:131px;width:87px;text-align:center;">ISO</div>
<div class="c" style="top:370px;left:305px;width:51px;text-align:center;">11-Feb-14</div>
<div class="c" style="top:370px;left:356px;width:51px;text-align:center;">11-Feb-16</div>
<div class="c" style="top:370px;left:407px;width:42px;text-align:center;">Standard</div>
<div class="c" style="top:370px;left:449px;width:51px;text-align:center;">11-Feb-24</div>
<div class="c" style="top:370px;left:500px;width:61px;text-align:center;">0.40</div>
<div class="c" style="top:370px;right:334.5px;text-align:right;">12,000</div>
<div class="c" style="top:370px;right:273.5px;text-align:right;">4,000</div>
<div class="c" style="top:370px;right:212.5px;text-align:right;">4,000</div>
<div class="c" style="top:383px;right:926.5px;text-align:right;">13</div>
<div class="c" style="top:383px;left:40px;">Goldberg, Rachel</div>
<div class="c" style="top:383px;left:131px;width:87px;text-align:center;">NSO</div>
<div class="c" style="top:383px;left:305px;width:51px;text-align:center;">11-Feb-14</div>
<div class="c" style="top:383px;left:356px;width:51px;text-align:center;">11-Feb-16</div>
<div class="c" style="top:383px;left:407px;width:42px;text-align:center;">Standard</div>
<div class="c" style="top:383px;left:449px;width:51px;text-align:center;">11-Feb-24</div>
<div class="c" style="top:383px;left:500px;width:61px;text-align:center;">0.40</div>
<div class="c" style="top:383px;right:334.5px;text-align:right;">12,000</div>
<div class="c" style="top:383px;right:273.5px;text-align:right;">4,000</div>
<div class="c" style="top:383px;right:212.5px;text-align:right;">4,000</div>
<div class="c" style="top:396px;right:926.5px;text-align:right;">14</div>
<div class="c" style="top:396px;left:40px;">Yu, Justin</div>
<div class="c" style="top:396px;left:131px;width:87px;text-align:center;">ISO</div>
<div class="c" style="top:396px;left:305px;width:51px;text-align:center;">11-Feb-14</div>
<div class="c" style="top:396px;left:356px;width:51px;text-align:center;">11-Feb-16</div>
<div class="c" style="top:396px;left:407px;width:42px;text-align:center;">Standard</div>
<div class="c" style="top:396px;left:449px;width:51px;text-align:center;">11-Feb-24</div>
<div class="c" style="top:396px;left:500px;width:61px;text-align:center;">0.40</div>
<div class="c" style="top:396px;right:334.5px;text-align:right;">11,250</div>
<div class="c" style="top:396px;right:273.5px;text-align:right;">3,750</div>
<div class="c" style="top:396px;right:212.5px;text-align:right;">3,750</div>
<div class="c" style="top:409px;right:926.5px;text-align:right;">15</div>
<div class="c" style="top:409px;left:40px;">Ackman, Sam</div>
<div class="c" style="top:409px;left:131px;width:87px;text-align:center;">ISO</div>
<div class="c" style="top:409px;left:305px;width:51px;text-align:center;">11-Feb-14</div>
<div class="c" style="top:409px;left:356px;width:51px;text-align:center;">11-Feb-16</div>
<div class="c" style="top:409px;left:407px;width:42px;text-align:center;">Standard</div>
<div class="c" style="top:409px;left:449px;width:51px;text-align:center;">11-Feb-24</div>
<div class="c" style="top:409px;left:500px;width:61px;text-align:center;">0.40</div>
<div class="c" style="top:409px;right:334.5px;text-align:right;">4,500</div>
<div class="c" style="top:409px;right:273.5px;text-align:right;">1,500</div>
<div class="c" style="top:409px;right:212.5px;text-align:right;">1,500</div>
<div class="c" style="top:422px;right:926.5px;text-align:right;">16</div>
<div class="c" style="top:422px;left:40px;">Johnson, Michael</div>
<div class="c" style="top:422px;left:131px;width:87px;text-align:center;">ISO</div>
<div class="c" style="top:422px;left:305px;width:51px;text-align:center;">11-Feb-14</div>
<div class="c" style="top:422px;left:356px;width:51px;text-align:center;">11-Feb-16</div>
<div class="c" style="top:422px;left:407px;width:42px;text-align:center;">Standard</div>
<div class="c" style="top:422px;left:449px;width:51px;text-align:center;">11-Feb-24</div>
<div class="c" style="top:422px;left:500px;width:61px;text-align:center;">0.40</div>
<div class="c" style="top:422px;right:334.5px;text-align:right;">10,000</div>
<div class="c" style="top:422px;right:273.5px;text-align:right;">3,333</div>
<div class="c" style="top:422px;right:212.5px;text-align:right;">3,333</div>
<div class="c" style="top:435px;right:926.5px;text-align:right;">17</div>
<div class="c" style="top:435px;left:40px;">Brakeman, Susan</div>
<div class="c" style="top:435px;left:131px;width:87px;text-align:center;">NSO</div>
<div class="c" style="top:435px;left:305px;width:51px;text-align:center;">11-Feb-14</div>
<div class="c" style="top:435px;left:356px;width:51px;text-align:center;">11-Feb-16</div>
<div class="c" style="top:435px;left:407px;width:42px;text-align:center;">Standard</div>
<div class="c" style="top:435px;left:449px;width:51px;text-align:center;">11-Feb-24</div>
<div class="c" style="top:435px;left:500px;width:61px;text-align:center;">0.40</div>
<div class="c" style="top:435px;right:334.5px;text-align:right;">45,000</div>
<div class="c" style="top:435px;right:273.5px;text-align:right;">15,000</div>
<div class="c" style="top:435px;right:212.5px;text-align:right;">15,000</div>
<div class="c b" style="top:448px;right:403.5px;text-align:right;right:400.5px;">Totals</div>
<div class="c b" style="top:448px;right:334.5px;text-align:right;font-size:9px;">289,250</div>
<div class="c b" style="top:448px;right:273.5px;text-align:right;font-size:9px;">109,229</div>
<div class="c b" style="top:448px;right:212.5px;text-align:right;font-size:9px;">109,229</div>
<div style="left:569px;top:444px;width:184px;height:1px;background:#404040;"></div>
<div style="left:569px;top:457px;width:184px;height:1px;background:#404040;"></div>
<div style="left:218px;top:223px;width:88px;height:1px;background:#fff;"></div>
<div class="c" style="left:218px;width:87px;top:227px;text-align:center;">=IF(</div>
<div style="left:269px;top:226px;width:1px;height:10px;background:#222;"></div>
<div style="left:217px;top:223px;width:89px;height:14px;border:2px solid #4f8164;"></div>
<div style="left:304px;top:235px;width:4px;height:4px;background:#4f8164;border:1px solid #fff;"></div>
<div style="left:260px;top:239px;width:187px;height:14px;background:#fff;border:1px solid #c6c6c6;"></div>
<div class="t" style="left:264px;top:242px;font-size:8.5px;color:#777;">IF(<b style="color:#333">logical_test</b>, [value_if_true], [value_if_false])</div>
<svg style="left:214px;top:182px" width="24" height="20" viewBox="214 182 24 20">
<path d="M224.2 187.2h3.4v3.4h3.4v3.4h-3.4v3.4h-3.4v-3.4h-3.4v-3.4h3.4z" fill="none" stroke="#000" stroke-opacity="0.45" stroke-width="1.2"/>
<path d="M223.7 186.7h3.4v3.4h3.4v3.4h-3.4v3.4h-3.4v-3.4h-3.4v-3.4h3.4z" fill="#fff" stroke="#000" stroke-width="1.1"/></svg>
<div style="left:944px;top:145px;width:1px;height:362px;background:#c6c6c6;"></div>
<div style="left:945px;top:140px;width:15px;height:383px;background:#e6e6e6;"></div>
<div style="left:946px;top:146px;width:12.5px;height:360px;background:#dadada;"></div>
<div style="left:946px;top:146px;width:12.5px;height:13px;background:#fff;border:1px solid #e0e0e0;"></div>
<svg style="left:946px;top:146px" width="12" height="13"><path d="M3 8h6l-3-3z" fill="#555"/></svg>
<div style="left:946px;top:160px;width:12.5px;height:321px;background:#fff;border:1px solid #d4d4d4;"></div>
<div style="left:946px;top:494px;width:12.5px;height:12px;background:#fff;"></div>
<svg style="left:946px;top:494px" width="12" height="12"><path d="M3.2 5h6l-3 3z" fill="#555"/></svg>
<div style="left:0px;top:506px;width:960px;height:17px;background:#e6e6e6;border-top:1px solid #c6c6c6;"></div>
<svg style="left:0;top:506px" width="60" height="17"><path d="M17 6l-3 2.5 3 2.5z" fill="#bbb"/><path d="M32 6l3 2.5-3 2.5z" fill="#bbb"/></svg>
<div style="left:59px;top:506px;width:45px;height:16px;background:#fff;border-bottom:2px solid #217346;"></div>
<div class="t" style="left:65px;top:509.5px;font-size:9.6px;color:#2b6344;font-weight:bold;">Sheet1</div>
<div class="t" style="left:111px;top:510px;font-size:9.3px;color:#444;">Sheet2</div>
<div style="left:148px;top:509px;width:1px;height:12px;background:#c6c6c6;"></div>
<div class="t" style="left:155px;top:510px;font-size:9.3px;color:#444;">Sheet3</div>
<div style="left:192px;top:509px;width:1px;height:12px;background:#c6c6c6;"></div>
<svg style="left:210px;top:507px" width="15" height="15"><circle cx="7.5" cy="7.5" r="5" fill="none" stroke="#666" stroke-width="1"/><path d="M7.5 5v5 M5 7.5h5" stroke="#666" stroke-width="1"/></svg>
<div style="left:574px;top:510px;width:1px;height:2px;background:#aaa;"></div>
<div style="left:574px;top:513px;width:1px;height:2px;background:#aaa;"></div>
<div style="left:574px;top:516px;width:1px;height:2px;background:#aaa;"></div>
<div style="left:584px;top:508px;width:361px;height:13px;background:#fff;border:1px solid #d4d4d4;"></div>
<div style="left:596px;top:508px;width:1px;height:13px;background:#d4d4d4;"></div>
<div style="left:912px;top:509px;width:22px;height:11px;background:#dcdcdc;"></div>
<div style="left:934px;top:508px;width:11px;height:13px;background:#fff;border:1px solid #d4d4d4;"></div>
<svg style="left:584px;top:508px" width="12" height="13"><path d="M7.5 3.5v6l-3-3z" fill="#555"/></svg>
<svg style="left:934px;top:508px" width="11" height="13"><path d="M4 3.5v6l3-3z" fill="#555"/></svg>
<div style="left:0px;top:523px;width:960px;height:16px;background:#f0f0f0;border-top:1px solid #d4d4d4;"></div>
<div class="t" style="left:4.5px;top:527px;font-size:8px;color:#666;">Enter</div>
<svg style="left:760px;top:523px" width="200" height="16" viewBox="760 523 200 16">
<g fill="none" stroke="#777" stroke-width="1">
<rect x="771.5" y="526.5" width="9" height="9"/><path d="M774.5 526.5v9 M777.5 526.5v9 M771.5 529.5h9 M771.5 532.5h9"/>
<rect x="793.5" y="526.5" width="9" height="9"/><rect x="795.5" y="528.5" width="5" height="5"/>
<rect x="816.5" y="526.5" width="9" height="9"/><path d="M819.5 526.5v4h3v-4"/>
</g>
<path d="M835 531.5h6 M921 531.5h6.5 M924.2 528.3v6.5" stroke="#a8a8a8" stroke-width="1.6"/>
<path d="M843.5 531.5h74" stroke="#c8c8c8" stroke-width="1.6"/>
<path d="M880.5 529v5" stroke="#888" stroke-width="1"/>
</svg>
<div class="t" style="left:936px;top:527.5px;font-size:8.4px;color:#aaa;">90%</div>
<div style="left:0px;top:539px;width:960px;height:1px;background:#222;"></div>
</body></html>
